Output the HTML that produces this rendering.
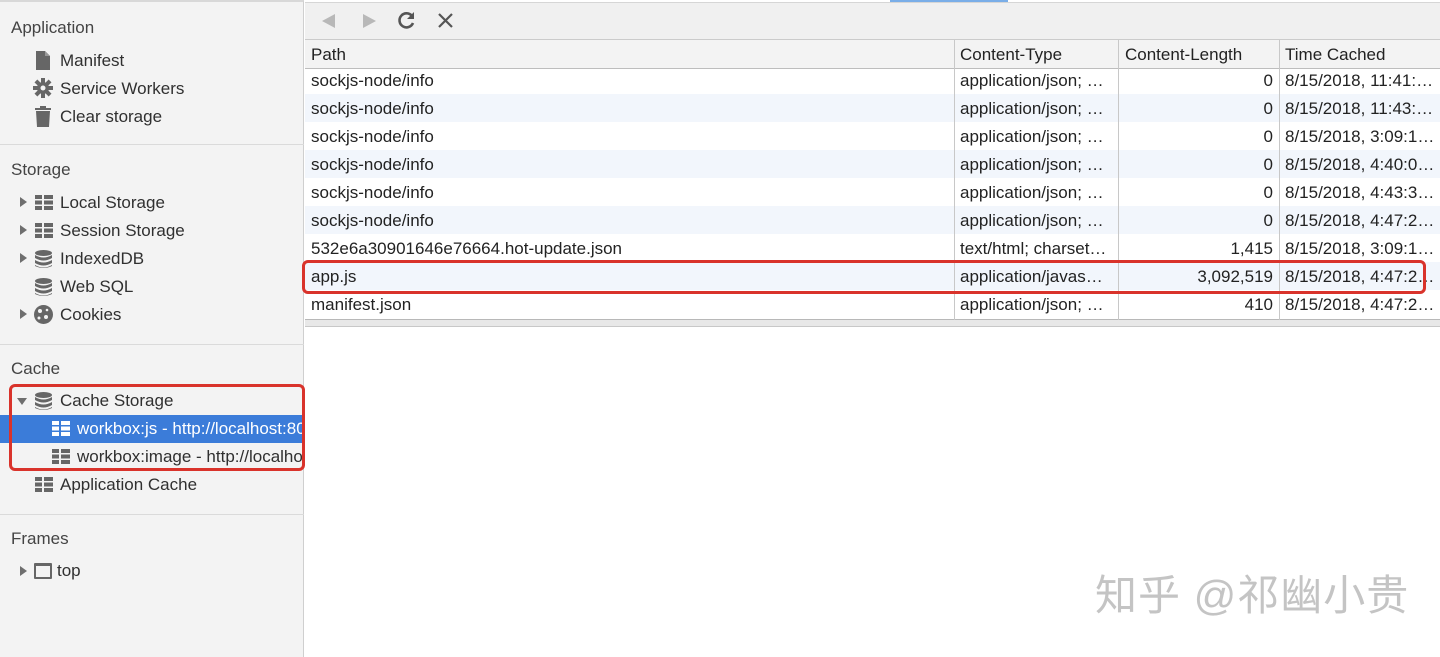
<!DOCTYPE html>
<html><head><meta charset="utf-8"><style>
*{margin:0;padding:0;box-sizing:border-box}
body{width:1440px;height:657px;overflow:hidden;background:#fff;font-family:"Liberation Sans",Arial,sans-serif;font-size:17px;color:#222;position:relative}
#side{position:absolute;left:0;top:0;width:304px;height:657px;background:#f3f3f3;border-right:1px solid #cfcfcf;border-top:2px solid #d8d8d8}
.h{position:absolute;left:11px;color:#444;font-size:17px}
.it{position:absolute;left:60px;color:#303030;white-space:nowrap}
.div{position:absolute;left:0;width:304px;border-top:1px solid #dadada}
.ic{position:absolute}
.tri{position:absolute;width:0;height:0;border-top:5px solid transparent;border-bottom:5px solid transparent;border-left:7px solid #6e6e6e}
.trid{position:absolute;width:0;height:0;border-left:5px solid transparent;border-right:5px solid transparent;border-top:7px solid #6e6e6e}
#main{position:absolute;left:305px;top:0;right:0;height:657px}
#tb{position:absolute;left:0;top:2px;right:0;height:38px;background:#f0f0f0;border-top:1px solid #d6d6d6;border-bottom:1px solid #cbcbcb}
#hdr{position:absolute;left:0;top:40px;right:0;height:29px;background:#f3f3f3;border-bottom:1px solid #bdbdbd}
.c{position:absolute;white-space:nowrap;overflow:hidden}
.row{position:absolute;left:0;right:0;height:28px}
.vl{position:absolute;top:40px;height:280px;border-left:1px solid #c8c8c8}
</style></head><body>
<div id="side">
<div class="h" style="top:16px">Application</div>
<svg class="ic" style="left:36px;top:49px" width="14" height="19" viewBox="0 0 14 19"><path d="M0 0H9L14 5V19H0Z" fill="#666"/><path d="M9 0V5H14" fill="#999"/></svg>
<div class="it" style="top:49px">Manifest</div>
<svg class="ic" style="left:33px;top:76px" width="20" height="20" viewBox="-10 -10 20 20"><g fill="#666"><circle r="6"/><rect x="-2" y="-10" width="4" height="20"/><rect x="-2" y="-10" width="4" height="20" transform="rotate(45)"/><rect x="-2" y="-10" width="4" height="20" transform="rotate(90)"/><rect x="-2" y="-10" width="4" height="20" transform="rotate(135)"/></g><circle r="2.5" fill="#f3f3f3"/></svg>
<div class="it" style="top:77px">Service Workers</div>
<svg class="ic" style="left:35px;top:104px" width="16" height="21" viewBox="0 0 16 21"><rect x="0" y="2" width="16" height="2" fill="#666"/><rect x="5" y="0" width="6" height="3" fill="#666"/><path d="M1 5H15L14 21H2Z" fill="#666"/></svg>
<div class="it" style="top:105px">Clear storage</div>
<div class="div" style="top:142px"></div>
<div class="h" style="top:158px">Storage</div>
<div class="tri" style="left:20px;top:195px"></div>
<svg class="ic" style="left:35px;top:193px" width="18" height="15"><g fill="#666"><rect x="0" y="0" width="7" height="4"/><rect x="9" y="0" width="9" height="4"/><rect x="0" y="5.5" width="7" height="4"/><rect x="9" y="5.5" width="9" height="4"/><rect x="0" y="11" width="7" height="4"/><rect x="9" y="11" width="9" height="4"/></g></svg>
<div class="it" style="top:191px">Local Storage</div>
<div class="tri" style="left:20px;top:223px"></div>
<svg class="ic" style="left:35px;top:221px" width="18" height="15"><g fill="#666"><rect x="0" y="0" width="7" height="4"/><rect x="9" y="0" width="9" height="4"/><rect x="0" y="5.5" width="7" height="4"/><rect x="9" y="5.5" width="9" height="4"/><rect x="0" y="11" width="7" height="4"/><rect x="9" y="11" width="9" height="4"/></g></svg>
<div class="it" style="top:219px">Session Storage</div>
<div class="tri" style="left:20px;top:251px"></div>
<svg class="ic" style="left:35px;top:248px" width="17" height="19"><g fill="#666"><ellipse cx="8.5" cy="3" rx="8.5" ry="3"/><path d="M0 5Q8.5 10 17 5V8Q8.5 13 0 8Z"/><path d="M0 10Q8.5 15 17 10V13Q8.5 18 0 13Z"/><path d="M0 15Q8.5 20 17 15V16Q8.5 20 0 16Z"/></g></svg>
<div class="it" style="top:247px">IndexedDB</div>
<svg class="ic" style="left:35px;top:276px" width="17" height="19"><g fill="#666"><ellipse cx="8.5" cy="3" rx="8.5" ry="3"/><path d="M0 5Q8.5 10 17 5V8Q8.5 13 0 8Z"/><path d="M0 10Q8.5 15 17 10V13Q8.5 18 0 13Z"/><path d="M0 15Q8.5 20 17 15V16Q8.5 20 0 16Z"/></g></svg>
<div class="it" style="top:275px">Web SQL</div>
<div class="tri" style="left:20px;top:307px"></div>
<svg class="ic" style="left:34px;top:303px" width="19" height="19"><circle cx="9.5" cy="9.5" r="9.5" fill="#666"/><g fill="#f3f3f3"><circle cx="6" cy="6" r="2"/><circle cx="12" cy="12" r="2"/><circle cx="5" cy="13" r="1.5"/><circle cx="13" cy="5" r="1.3"/></g></svg>
<div class="it" style="top:303px">Cookies</div>
<div class="div" style="top:342px"></div>
<div class="h" style="top:357px">Cache</div>
<div class="trid" style="left:17px;top:396px"></div>
<svg class="ic" style="left:35px;top:390px" width="17" height="19"><g fill="#666"><ellipse cx="8.5" cy="3" rx="8.5" ry="3"/><path d="M0 5Q8.5 10 17 5V8Q8.5 13 0 8Z"/><path d="M0 10Q8.5 15 17 10V13Q8.5 18 0 13Z"/><path d="M0 15Q8.5 20 17 15V16Q8.5 20 0 16Z"/></g></svg>
<div class="it" style="top:389px">Cache Storage</div>
<div style="position:absolute;left:0;top:413px;width:303px;height:28px;background:#3b7cd9"></div>
<svg class="ic" style="left:52px;top:419px" width="18" height="15"><g fill="#fff"><rect x="0" y="0" width="7" height="4"/><rect x="9" y="0" width="9" height="4"/><rect x="0" y="5.5" width="7" height="4"/><rect x="9" y="5.5" width="9" height="4"/><rect x="0" y="11" width="7" height="4"/><rect x="9" y="11" width="9" height="4"/></g></svg>
<div class="it" style="left:77px;top:417px;color:#fff;width:226px;overflow:hidden">workbox:js - http://localhost:8080</div>
<svg class="ic" style="left:52px;top:447px" width="18" height="15"><g fill="#666"><rect x="0" y="0" width="7" height="4"/><rect x="9" y="0" width="9" height="4"/><rect x="0" y="5.5" width="7" height="4"/><rect x="9" y="5.5" width="9" height="4"/><rect x="0" y="11" width="7" height="4"/><rect x="9" y="11" width="9" height="4"/></g></svg>
<div class="it" style="left:77px;top:445px;width:226px;overflow:hidden">workbox:image - http://localhost:8080</div>
<svg class="ic" style="left:35px;top:475px" width="18" height="15"><g fill="#666"><rect x="0" y="0" width="7" height="4"/><rect x="9" y="0" width="9" height="4"/><rect x="0" y="5.5" width="7" height="4"/><rect x="9" y="5.5" width="9" height="4"/><rect x="0" y="11" width="7" height="4"/><rect x="9" y="11" width="9" height="4"/></g></svg>
<div class="it" style="top:473px">Application Cache</div>
<div class="div" style="top:512px"></div>
<div class="h" style="top:527px">Frames</div>
<div class="tri" style="left:20px;top:564px"></div>
<div style="position:absolute;left:34px;top:561px;width:18px;height:16px;border:2px solid #666;border-top-width:3px;border-radius:1px"></div>
<div class="it" style="left:57px;top:559px">top</div>
<div style="position:absolute;left:9px;top:382px;width:296px;height:87px;border:3px solid #d9332b;border-radius:6px"></div>
</div>
<div id="main">
<div style="position:absolute;left:585px;top:0;width:118px;height:2px;background:#7aaee8"></div>
<div id="tb">
<svg style="position:absolute;left:17px;top:11px" width="14" height="14"><path d="M0 7L13 0V14Z" fill="#b8b8b8"/></svg>
<svg style="position:absolute;left:57px;top:11px" width="14" height="14"><path d="M14 7L1 0V14Z" fill="#b8b8b8"/></svg>
<svg style="position:absolute;left:92px;top:8px" width="19" height="19" viewBox="0 0 19 19"><path d="M15 5A7 7 0 1 0 16 12" fill="none" stroke="#555" stroke-width="2.6"/><path d="M17 1V8H10Z" fill="#555"/></svg>
<svg style="position:absolute;left:133px;top:10px" width="15" height="15"><path d="M1 1L14 14M14 1L1 14" stroke="#555" stroke-width="2.2"/></svg>
</div>
<div id="hdr">
<div class="c" style="left:6px;top:5px">Path</div>
<div class="c" style="left:655px;top:5px">Content-Type</div>
<div class="c" style="left:820px;top:5px">Content-Length</div>
<div class="c" style="left:980px;top:5px">Time Cached</div>
</div>
<div id="rows"></div>
<div style="position:absolute;left:0;right:0;top:319px;height:8px;background:#e8e8e8;border-top:1px solid #b8b8b8;border-bottom:1px solid #c8c8c8"></div>
<div class="vl" style="left:649px"></div><div class="vl" style="left:813px"></div><div class="vl" style="left:974px"></div>
<div style="position:absolute;left:-3px;top:260px;width:1124px;height:34px;border:3px solid #d9332b;border-radius:6px"></div>
<div style="position:absolute;left:790px;top:566px;font-family:'Liberation Sans','Noto Sans CJK SC',sans-serif;font-size:42px;line-height:60px;color:#c4c4c4;letter-spacing:1px">知乎 @祁幽小贵</div>
</div>
<script>
var d=[["sockjs-node/info","application/json; …","0","8/15/2018, 11:41:…"],["sockjs-node/info","application/json; …","0","8/15/2018, 11:43:…"],["sockjs-node/info","application/json; …","0","8/15/2018, 3:09:1…"],["sockjs-node/info","application/json; …","0","8/15/2018, 4:40:0…"],["sockjs-node/info","application/json; …","0","8/15/2018, 4:43:3…"],["sockjs-node/info","application/json; …","0","8/15/2018, 4:47:2…"],["532e6a30901646e76664.hot-update.json","text/html; charset…","1,415","8/15/2018, 3:09:1…"],["app.js","application/javas…","3,092,519","8/15/2018, 4:47:2…"],["manifest.json","application/json; …","410","8/15/2018, 4:47:2…"]];
var h="";d.forEach(function(r,i){var t=i==0?69:66+i*28;var ht=i==0?25:28;var tp=i==0?2:5;h+='<div class="row" style="top:'+t+'px;height:'+ht+'px;background:'+(i%2?'#f2f6fc':'#fff')+'"><div class="c" style="left:6px;top:'+tp+'px">'+r[0]+'</div><div class="c" style="left:655px;top:'+tp+'px">'+r[1]+'</div><div class="c" style="left:814px;width:154px;text-align:right;top:'+tp+'px">'+r[2]+'</div><div class="c" style="left:980px;top:'+tp+'px">'+r[3]+'</div></div>';});
document.getElementById('rows').innerHTML=h;
</script>
</body></html>
